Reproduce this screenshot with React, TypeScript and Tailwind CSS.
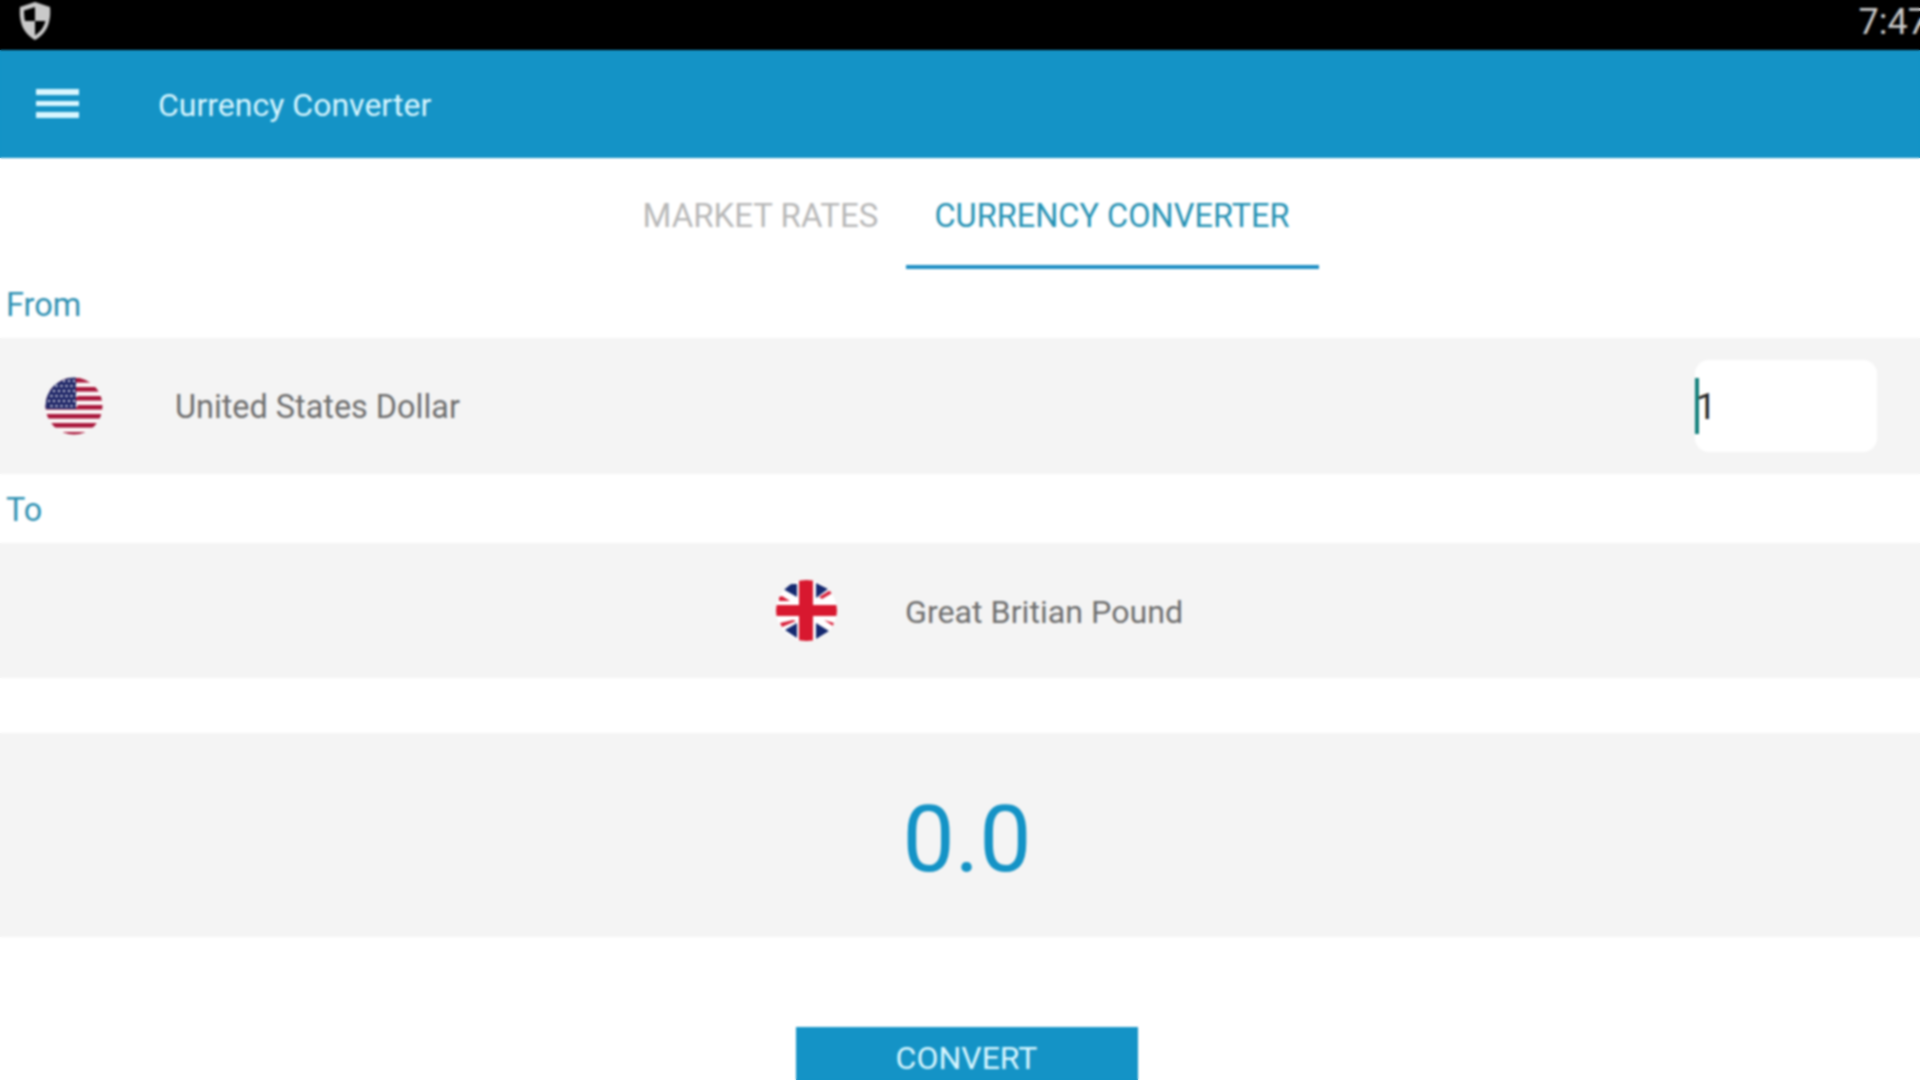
import React from "react";

function ShieldIcon() {
  return (
    <svg width="34" height="40" viewBox="0 0 34 40" className="ml-[18px] mt-[1px]">
      <path d="M17 1 L32 6 C33 18 31 31 17 39 C3 31 1 18 2 6 Z" fill="#c9c9c9" />
      <path d="M17 6 L6 9.5 C6 14 6.4 17.5 7 20 L17 20 Z" fill="#000" />
      <path d="M17 20 L27.5 20 C26 26 22.5 31 17 34.5 Z" fill="#000" />
    </svg>
  );
}

function UsFlag() {
  const stripes = [0, 1, 2, 3, 4, 5, 6];
  const dots: [number, number][] = [];
  for (let r = 0; r < 6; r++) {
    for (let c = 0; c < 6; c++) {
      dots.push([4 + c * 5 + (r % 2 ? 2.5 : 0), 4 + r * 5]);
    }
  }
  return (
    <svg width="58" height="58" viewBox="0 0 58 58" className="shrink-0">
      <defs>
        <clipPath id="usclip">
          <circle cx="29" cy="29" r="28.5" />
        </clipPath>
      </defs>
      <g clipPath="url(#usclip)">
        <rect width="58" height="58" fill="#fbf6f6" />
        {stripes.map((i) => (
          <rect key={i} x="0" y={1 + i * 9} width="58" height="4.6" fill="#a8163a" />
        ))}
        <rect x="0" y="0" width="31" height="32" fill="#232a6a" />
        {dots.map(([x, y], i) => (
          <circle key={i} cx={x} cy={y} r="1.1" fill="#ffffff" />
        ))}
      </g>
    </svg>
  );
}

function UkFlag() {
  return (
    <svg width="61" height="61" viewBox="0 0 61 61" className="shrink-0">
      <defs>
        <clipPath id="ukclip">
          <circle cx="30.5" cy="30.5" r="30.5" />
        </clipPath>
      </defs>
      <g clipPath="url(#ukclip)">
        <rect width="61" height="61" fill="#ffffff" />
        <polygon points="21,4 21,17 7,9 14,4" fill="#14286f" />
        <polygon points="40,3 52,9 40,18" fill="#14286f" />
        <polygon points="21,43 21,58 9,50" fill="#14286f" />
        <polygon points="40,43 53,51 40,59" fill="#14286f" />
        <polygon points="43,17 56,9 58,12 46,19" fill="#d8203a" />
        <polygon points="3,17 6,16 14,21 3,21" fill="#d8203a" />
        <polygon points="4,43 17,40 20,41 6,47" fill="#d8203a" />
        <polygon points="48,40 58,43 57,46" fill="#d8203a" />
        <rect x="23" y="0" width="14" height="61" fill="#d8182f" />
        <rect x="0" y="25" width="61" height="11" fill="#d8182f" />
      </g>
    </svg>
  );
}

export default function App() {
  return (
    <div className="relative w-[1920px] h-[1080px] overflow-hidden bg-white flex flex-col font-['Roboto',sans-serif]">
      <div className="h-[50px] shrink-0 bg-black flex items-start justify-between">
        <ShieldIcon />
        <span className="text-[36px] leading-[44px] text-[#c8c8c8] whitespace-nowrap -mr-[8px]">7:47</span>
      </div>

      <div className="h-[108px] shrink-0 bg-[#1493c6] flex items-center">
        <div className="ml-[36px] w-[43px] flex flex-col gap-[6px] mt-[-2px]">
          <div className="h-[6px] bg-[#d8f6ff]" />
          <div className="h-[5px] bg-[#d8f6ff]" />
          <div className="h-[6px] bg-[#d8f6ff]" />
        </div>
        <span className="ml-[79px] text-[32px] leading-none text-[#d8f6ff] mt-[2px]">Currency Converter</span>
      </div>

      <div className="h-[111px] shrink-0 flex justify-center pl-[14px]">
        <div className="w-[290px] flex items-start justify-center pt-[40px]">
          <span className="text-[33px] leading-[36px] text-[#b8b8b8] whitespace-nowrap">MARKET RATES</span>
        </div>
        <div className="w-[413px] flex items-start justify-center pt-[40px] border-b-[4px] border-[#1f8fc4]">
          <span className="text-[32.5px] leading-[36px] text-[#2792b4] whitespace-nowrap">CURRENCY CONVERTER</span>
        </div>
      </div>

      <div className="h-[69px] shrink-0 pl-[6px] flex items-center">
        <span className="text-[32.5px] leading-none text-[#2e90b2] mt-[4px]">From</span>
      </div>

      <div className="h-[136px] shrink-0 bg-[#f4f4f4] flex items-center pl-[45px] pr-[43px]">
        <UsFlag />
        <span className="ml-[72px] text-[32.4px] leading-none text-[#6f6f6f] whitespace-nowrap mt-[3px]">United States Dollar</span>
        <div className="relative ml-auto w-[182px] h-[92px] rounded-[14px] bg-white">
          <span className="absolute left-[1px] top-[24px] text-[36px] leading-[46px] text-[#222222]">1</span>
          <div className="absolute left-0 top-[18px] w-[4px] h-[56px] bg-[#14807c]" />
        </div>
      </div>

      <div className="h-[69px] shrink-0 pl-[6px] flex items-center">
        <span className="text-[32.4px] leading-none text-[#2e90b2] mt-[3px]">To</span>
      </div>

      <div className="h-[135px] shrink-0 bg-[#f4f4f4] flex items-center pl-[776px]">
        <UkFlag />
        <span className="ml-[68px] text-[32.2px] leading-none text-[#6f6f6f] whitespace-nowrap mt-[3px]">Great Britian Pound</span>
      </div>

      <div className="h-[55px] shrink-0" />

      <div className="h-[204px] shrink-0 bg-[#f4f4f4] flex justify-center pl-[14px]">
        <span className="mt-[52px] text-[93px] leading-[110px] text-[#1493c6]">0.0</span>
      </div>

      <div className="h-[90px] shrink-0" />

      <div className="self-center ml-[13px] w-[342px] h-[53px] shrink-0 bg-[#1493c6] flex items-start justify-center">
        <span className="mt-[13px] text-[32px] leading-[36px] text-[#d8f6ff]">CONVERT</span>
      </div>

      <div className="absolute inset-0 backdrop-blur-[0.8px]" />
    </div>
  );
}
